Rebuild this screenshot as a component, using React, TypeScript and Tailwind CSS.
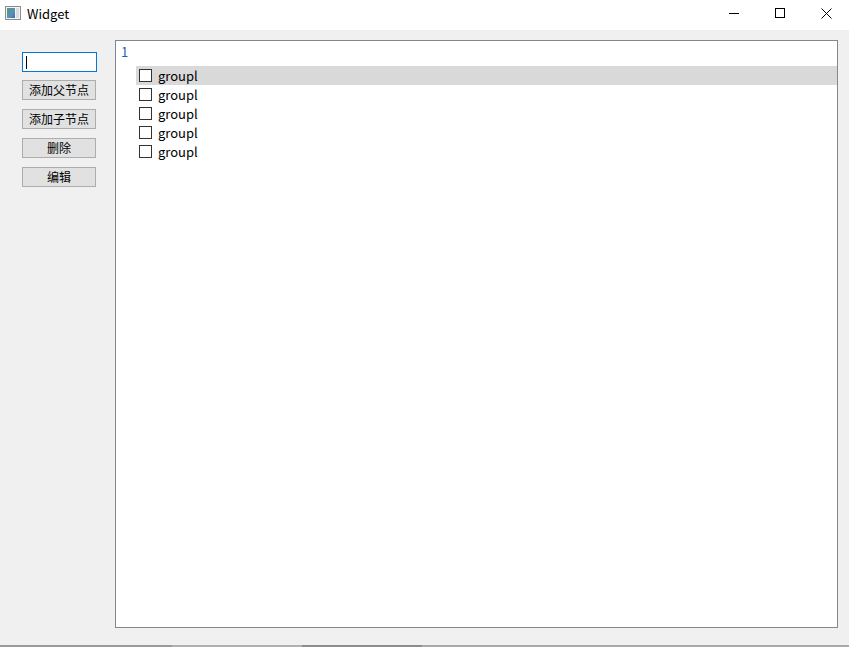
import React from 'react';

const ui = { fontFamily: '"Noto Sans CJK SC", "Noto Sans", sans-serif' };

function AppIcon() {
  return (
    <svg width="16" height="14" viewBox="0 0 16 14" className="shrink-0">
      <rect x="0.5" y="0.5" width="15" height="13" fill="#f4f4f4" stroke="#8c8c8c" />
      <defs>
        <linearGradient id="g1" x1="0" y1="0" x2="1" y2="1">
          <stop offset="0" stopColor="#4c9f6a" />
          <stop offset="0.6" stopColor="#5a8fbf" />
          <stop offset="1" stopColor="#3c6fa8" />
        </linearGradient>
      </defs>
      <rect x="2" y="2" width="8" height="10" fill="url(#g1)" />
      <rect x="11" y="2" width="3" height="10" fill="#d8dde3" />
    </svg>
  );
}

function TitleBar() {
  return (
    <div className="flex items-center h-[30px] bg-white pb-[4px]">
      <div className="flex items-center gap-[6px] pl-[5px] flex-1">
        <AppIcon />
        <span className="text-[13px] text-black leading-none" style={ui}>Widget</span>
      </div>
      <div className="flex h-full">
        <div className="w-[46px] h-full flex items-center justify-center">
          <svg width="10" height="10" viewBox="0 0 10 10"><line x1="0" y1="5.5" x2="10" y2="5.5" stroke="#000" strokeWidth="1" /></svg>
        </div>
        <div className="w-[46px] h-full flex items-center justify-center">
          <svg width="10" height="10" viewBox="0 0 10 10"><rect x="0.5" y="0.5" width="9" height="9" fill="none" stroke="#000" strokeWidth="1" /></svg>
        </div>
        <div className="w-[46px] h-full flex items-center justify-center">
          <svg width="11" height="11" viewBox="0 0 11 11"><path d="M0.5 0.5 L10.5 10.5 M10.5 0.5 L0.5 10.5" stroke="#000" strokeWidth="1" /></svg>
        </div>
      </div>
    </div>
  );
}

function Button({ label }: { label: string }) {
  return (
    <button
      className="w-[74px] h-[20px] bg-[#e1e1e1] border border-[#adadad] text-[12px] text-black leading-none flex items-center justify-center"
      style={ui}
    >
      {label}
    </button>
  );
}

function TreeRow({ selected }: { selected?: boolean }) {
  return (
    <div className={`flex items-center h-[19px] pl-[3px] ${selected ? 'bg-[#d9d9d9]' : ''}`}>
      <span className="w-[13px] h-[13px] border border-[#333] bg-white shrink-0" />
      <span className="ml-[6px] text-[13px] text-black leading-none" style={ui}>groupl</span>
    </div>
  );
}

export default function App() {
  return (
    <div className="w-[849px] h-[647px] bg-[#f0f0f0] flex flex-col overflow-hidden">
      <TitleBar />
      <div className="flex flex-1 pt-[10px] pl-[22px]">
        <div className="flex flex-col w-[75px] pt-[12px] gap-[9px]">
          <div className="w-[75px] h-[20px] border border-[#0078d7] bg-white flex items-center pl-[3px] mb-[-1px]">
            <span className="w-[1px] h-[13px] bg-black" />
          </div>
          <Button label="添加父节点" />
          <Button label="添加子节点" />
          <Button label="删除" />
          <Button label="编辑" />
        </div>
        <div className="ml-[18px] w-[723px] h-[588px] border border-[#828790] bg-white flex flex-col">
          <div className="h-[25px] pl-[5px] pt-[4px] text-[13px] text-[#1a5fb4] leading-none" style={ui}>1</div>
          <div className="pl-[20px] flex flex-col">
            <TreeRow selected />
            <TreeRow />
            <TreeRow />
            <TreeRow />
            <TreeRow />
          </div>
        </div>
      </div>
      <div className="h-[2px] flex">
        <div className="w-[172px] bg-[#9a9a9a]" />
        <div className="w-[130px] bg-[#b0b0b0]" />
        <div className="w-[120px] bg-[#8c8c8c]" />
        <div className="flex-1 bg-[#a8a8a8]" />
      </div>
    </div>
  );
}
